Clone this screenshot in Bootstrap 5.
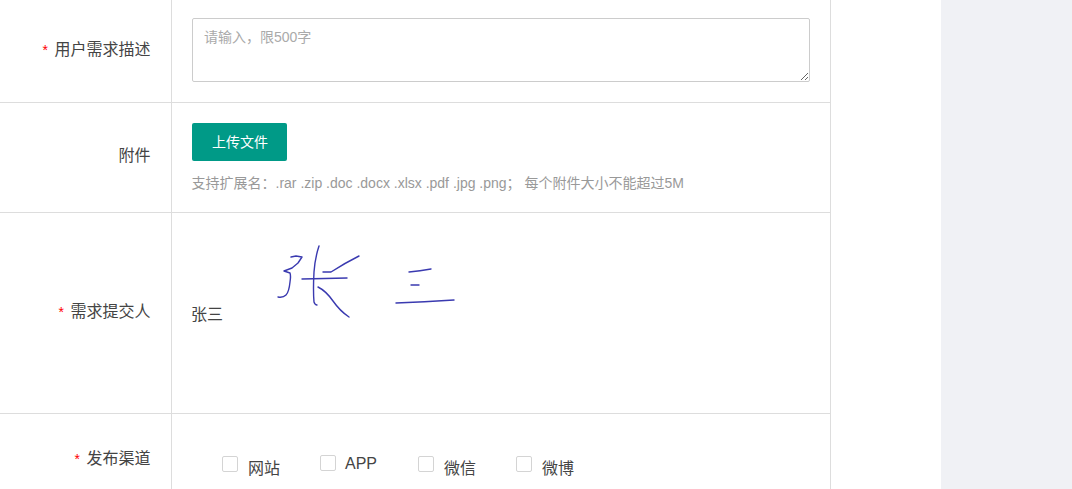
<!DOCTYPE html>
<html lang="zh">
<head>
<meta charset="utf-8">
<title>需求表单</title>
<link href="https://cdn.jsdelivr.net/npm/bootstrap@5.3.0/dist/css/bootstrap.min.css" rel="stylesheet">
<style>
html,body{height:489px;overflow:hidden;background:#f0f1f5;}
body{font-family:"Liberation Sans","Noto Sans CJK SC",sans-serif;font-size:16px;color:#444;}
.page-main{width:941px;height:489px;background:#fff;}
.form-sheet{width:831px;border-right:1px solid #ddd;}
.form-line{border-bottom:1px solid #ddd;}
.form-line:last-child{border-bottom:0;}
.line-a{height:103px;}
.line-b{height:110px;}
.line-c{height:201px;}
.line-d{height:75px;}
.cap{width:172px;flex:none;border-right:1px solid #ddd;padding-right:20.5px;text-align:right;line-height:24px;}
.cap-a,.cap-c{padding-bottom:2px;}
.cap-b{padding-bottom:4px;}
.cap-d{padding-top:33px;}
.req{color:#f00;font-size:14px;margin-right:2px;}
.fld{flex:1;padding-left:20px;padding-right:20px;min-width:0;}
.fld-chan{padding-top:42px;}
.need-box{display:block;width:100%;height:64px;margin-top:18px;padding:8px 11px;border:1px solid #ccc;border-radius:2px;font-size:14px;line-height:20px;color:#444;outline:0;}
.need-box::placeholder{color:#aaa;opacity:1;}
.btn-up{width:95px;height:38px;padding:0 0 0 1px;background:#009a87;border:0;border-radius:2px;color:#fff;font-size:14px;}
.btn-up:hover{background:#009a87;color:#fff;}
.tip-text{font-size:14px;line-height:20px;color:#999;margin-top:12px;margin-left:-0.5px;}
.sign-name{width:32px;flex:none;margin-left:-1px;margin-right:1px;margin-top:4px;}
.sign-pic{display:block;flex:none;}
.chan-item{width:98px;flex:none;padding-left:30px;}
.chan-app{margin-top:-1px;}
.chan-box{appearance:none;width:16px;height:16px;border:1px solid #d4d4d4;border-radius:2px;margin:0;flex:none;background:#fff;}
.chan-text{margin-left:10px;margin-top:1px;line-height:24px;white-space:nowrap;}
.chan-app .chan-text{margin-left:9px;margin-top:-3px;}
</style>
</head>
<body>
<div class="page-main">
  <div class="form-sheet">
    <div class="form-line line-a d-flex">
      <div class="cap cap-a d-flex align-items-center justify-content-end"><span><span class="req">*</span> 用户需求描述</span></div>
      <div class="fld"><textarea class="need-box" placeholder="请输入，限500字"></textarea></div>
    </div>
    <div class="form-line line-b d-flex">
      <div class="cap cap-b d-flex align-items-center justify-content-end">附件</div>
      <div class="fld pt-3">
        <button type="button" class="btn btn-up mt-1">上传文件</button>
        <div class="tip-text">支持扩展名：.rar .zip .doc .docx .xlsx .pdf .jpg .png； 每个附件大小不能超过5M</div>
      </div>
    </div>
    <div class="form-line line-c d-flex">
      <div class="cap cap-c d-flex align-items-center justify-content-end"><span><span class="req">*</span> 需求提交人</span></div>
      <div class="fld d-flex align-items-center">
        <span class="sign-name">张三</span>
        <svg class="sign-pic" width="260" height="200" viewBox="224 213 260 200" fill="none" stroke="#3a3ab0" stroke-width="1.4" stroke-linecap="round" stroke-linejoin="round" aria-hidden="true">
          <path d="M291 257L296 256L302 257L298 263L292 268L284 271L290 273Q291 276 290 282Q289 292 286 295Q283 298 278 297"/>
          <path d="M319 246Q315 258 314 272Q313 290 314 302Q315 305 317 305"/>
          <path d="M302 279L347 278"/>
          <path d="M323 272L331 272Q345 263 359 256"/>
          <path d="M318 287Q326 291 333 301Q340 311 349 317"/>
          <path d="M409 272Q420 271 431 269"/>
          <path d="M411 285L419 285"/>
          <path d="M396 303Q424 302 454 300"/>
        </svg>
      </div>
    </div>
    <div class="form-line line-d d-flex">
      <div class="cap cap-d"><span class="req">*</span> 发布渠道</div>
      <div class="fld fld-chan d-flex align-items-start">
        <label class="chan-item d-flex align-items-start"><input type="checkbox" class="chan-box"><span class="chan-text">网站</span></label>
        <label class="chan-item chan-app d-flex align-items-start"><input type="checkbox" class="chan-box"><span class="chan-text">APP</span></label>
        <label class="chan-item d-flex align-items-start"><input type="checkbox" class="chan-box"><span class="chan-text">微信</span></label>
        <label class="chan-item d-flex align-items-start"><input type="checkbox" class="chan-box"><span class="chan-text">微博</span></label>
      </div>
    </div>
  </div>
</div>
<script src="https://cdn.jsdelivr.net/npm/bootstrap@5.3.0/dist/js/bootstrap.bundle.min.js"></script>
</body>
</html>
